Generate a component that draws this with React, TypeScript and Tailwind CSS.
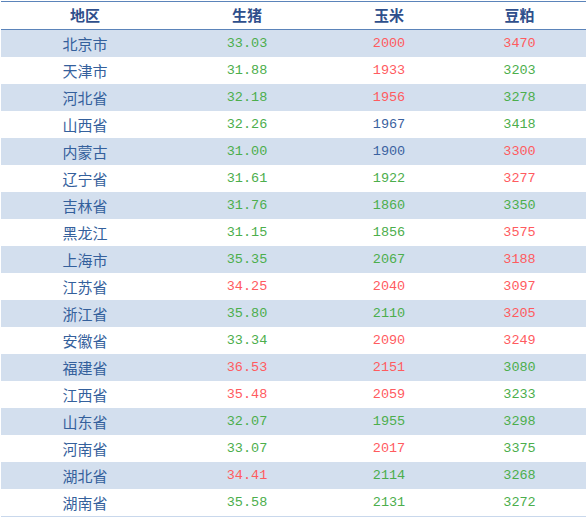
type Tone = "up" | "down" | "flat";

interface Row {
  region: string;
  pig: [string, Tone];
  corn: [string, Tone];
  meal: [string, Tone];
}

const rows: Row[] = [
  { region: "北京市", pig: ["33.03", "down"], corn: ["2000", "up"], meal: ["3470", "up"] },
  { region: "天津市", pig: ["31.88", "down"], corn: ["1933", "up"], meal: ["3203", "down"] },
  { region: "河北省", pig: ["32.18", "down"], corn: ["1956", "up"], meal: ["3278", "down"] },
  { region: "山西省", pig: ["32.26", "down"], corn: ["1967", "flat"], meal: ["3418", "down"] },
  { region: "内蒙古", pig: ["31.00", "down"], corn: ["1900", "flat"], meal: ["3300", "up"] },
  { region: "辽宁省", pig: ["31.61", "down"], corn: ["1922", "down"], meal: ["3277", "up"] },
  { region: "吉林省", pig: ["31.76", "down"], corn: ["1860", "down"], meal: ["3350", "down"] },
  { region: "黑龙江", pig: ["31.15", "down"], corn: ["1856", "down"], meal: ["3575", "up"] },
  { region: "上海市", pig: ["35.35", "down"], corn: ["2067", "down"], meal: ["3188", "up"] },
  { region: "江苏省", pig: ["34.25", "up"], corn: ["2040", "up"], meal: ["3097", "up"] },
  { region: "浙江省", pig: ["35.80", "down"], corn: ["2110", "down"], meal: ["3205", "up"] },
  { region: "安徽省", pig: ["33.34", "down"], corn: ["2090", "up"], meal: ["3249", "up"] },
  { region: "福建省", pig: ["36.53", "up"], corn: ["2151", "up"], meal: ["3080", "down"] },
  { region: "江西省", pig: ["35.48", "up"], corn: ["2059", "up"], meal: ["3233", "down"] },
  { region: "山东省", pig: ["32.07", "down"], corn: ["1955", "down"], meal: ["3298", "down"] },
  { region: "河南省", pig: ["33.07", "down"], corn: ["2017", "up"], meal: ["3375", "down"] },
  { region: "湖北省", pig: ["34.41", "up"], corn: ["2114", "down"], meal: ["3268", "down"] },
  { region: "湖南省", pig: ["35.58", "down"], corn: ["2131", "down"], meal: ["3272", "down"] },
];

const toneClass = (t: Tone) =>
  t === "up" ? "text-[#ff5b5f]" : t === "down" ? "text-[#4cae4c]" : "text-[#3a62a0]";

function Num({ value }: { value: [string, Tone] }) {
  return (
    <div className={`flex items-center justify-center pt-[2px] font-['Liberation_Mono',monospace] text-[13.5px] ${toneClass(value[1])}`}>
      {value[0]}
    </div>
  );
}

export default function App() {
  const cols = "grid grid-cols-[168px_156px_128px_133px]";
  return (
    <div className="w-[587px] h-[517px] bg-white pt-px pl-px">
      <div className="w-[585px] border-t border-[#5b84ba]">
        {/* Header */}
        <div className={`${cols} h-[28px] border-b border-[#5b84ba] font-['Noto_Sans_CJK_SC',sans-serif] text-[15px] font-bold text-[#2f4f8c]`}>
          <div className="flex items-center justify-center">地区</div>
          <div className="flex items-center justify-center">生猪</div>
          <div className="flex items-center justify-center">玉米</div>
          <div className="flex items-center justify-center">豆粕</div>
        </div>

        {/* Rows */}
        {rows.map((r, i) => (
          <div
            key={r.region}
            className={`${cols} h-[27px] ${i % 2 === 0 ? "bg-[#d3dfee]" : "bg-white"}`}
          >
            <div className="flex items-center justify-center pt-px font-['Noto_Sans_CJK_SC',sans-serif] text-[15px] text-[#34609c]">
              {r.region}
            </div>
            <Num value={r.pig} />
            <Num value={r.corn} />
            <Num value={r.meal} />
          </div>
        ))}
        <div className="h-px bg-[#c9d8ec]" />
      </div>
    </div>
  );
}
